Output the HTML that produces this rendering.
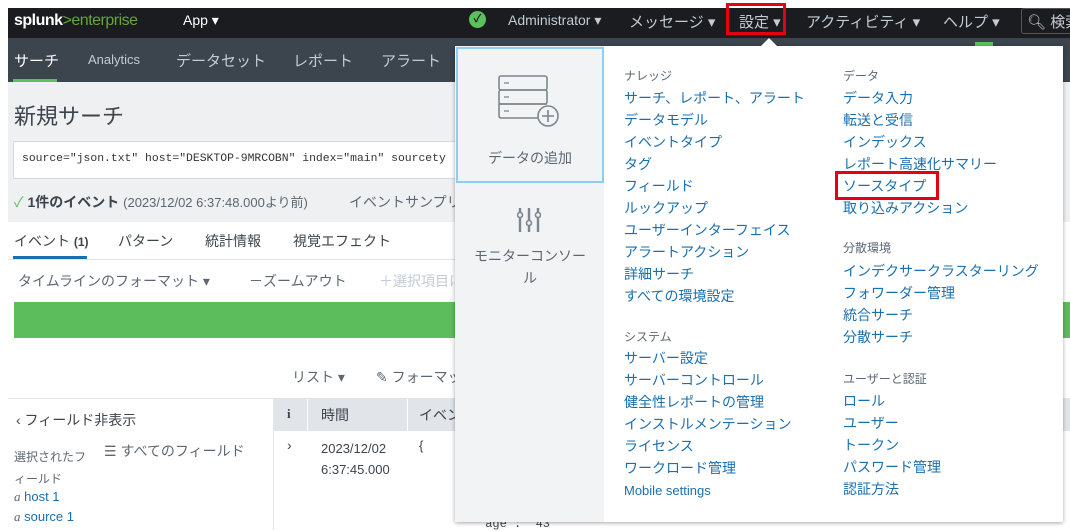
<!DOCTYPE html>
<html><head><meta charset="utf-8"><style>
*{margin:0;padding:0;box-sizing:border-box}
body{width:1070px;height:530px;overflow:hidden;background:#fff;font-family:"Liberation Sans","Noto Sans CJK JP",sans-serif;position:relative;color:#3c444d}
.a{position:absolute;white-space:nowrap}
.w{color:#fff}
.l{color:#c3cbd4}
.blue{color:#1a6faf;font-size:14px}
.h{color:#5c6773;font-size:12px}
.red{position:absolute;border:3px solid #e60012}
</style></head><body>
<!-- top bar -->
<div class="a" style="left:8px;top:8px;width:1062px;height:30px;background:#1a1c20"></div>
<div class="a" style="left:14px;top:12px;font-size:16px;font-weight:bold;color:#fff;letter-spacing:-0.5px">splunk<span style="color:#65a637;font-weight:normal">&gt;enterprise</span></div>
<div class="a w" style="left:183px;top:12px;font-size:14px">App ▾</div>
<div class="a" style="left:469px;top:11px;width:17px;height:17px;border-radius:50%;background:#5cc05c;color:#1a1c20;font-size:11px;text-align:center;line-height:17px;font-weight:bold">✓</div>
<div class="a l" style="left:508px;top:12px;font-size:14px">Administrator ▾</div>
<div class="a l" style="left:629px;top:11px;font-size:15px">メッセージ ▾</div>
<div class="a l" style="left:739px;top:11px;font-size:15px">設定 ▾</div>
<div class="red" style="left:726px;top:3px;width:60px;height:32px"></div>
<div class="a l" style="left:806px;top:11px;font-size:15px">アクティビティ ▾</div>
<div class="a l" style="left:943px;top:11px;font-size:15px">ヘルプ ▾</div>
<div class="a" style="left:1021px;top:8px;width:55px;height:26px;border:1px solid #555;border-radius:3px"></div>
<div class="a l" style="left:1027px;top:11px;font-size:15px">🔍︎ 検索</div>
<!-- app bar -->
<div class="a" style="left:8px;top:38px;width:1062px;height:44px;background:#3c444d"></div>
<div class="a w" style="left:14px;top:50px;font-size:15px">サーチ</div>
<div class="a" style="left:13px;top:79px;width:44px;height:3px;background:#5cc05c"></div>
<div class="a l" style="left:88px;top:52px;font-size:13px">Analytics</div>
<div class="a l" style="left:176px;top:50px;font-size:15px">データセット</div>
<div class="a l" style="left:293px;top:50px;font-size:15px">レポート</div>
<div class="a l" style="left:381px;top:50px;font-size:15px">アラート</div>
<div class="a" style="left:975px;top:42px;width:18px;height:4px;background:#5cc05c"></div>
<!-- page -->
<div class="a" style="left:8px;top:82px;width:1062px;height:140px;background:#eef0f1"></div>
<div class="a" style="left:14px;top:99px;font-size:22px;color:#3c444d">新規サーチ</div>
<div class="a" style="left:13px;top:141px;width:450px;height:38px;background:#fff;border:1px solid #d4d7db;border-radius:2px"></div>
<div class="a" style="left:22px;top:153px;font-family:'Liberation Mono',monospace;font-size:11.4px;color:#333">source="json.txt" host="DESKTOP-9MRCOBN" index="main" sourcety</div>
<div class="a" style="left:14px;top:192px;font-size:14px"><span style="color:#5cc05c">✓</span> <b>1件のイベント</b> <span style="color:#5c6773;font-size:13px">(2023/12/02 6:37:48.000より前)</span></div>
<div class="a" style="left:349px;top:192px;font-size:14px;color:#5c6773">イベントサンプリ</div>
<div class="a" style="left:14px;top:231px;font-size:14px">イベント <b style="font-size:12px">(1)</b></div>
<div class="a" style="left:118px;top:231px;font-size:14px">パターン</div>
<div class="a" style="left:205px;top:231px;font-size:14px">統計情報</div>
<div class="a" style="left:293px;top:231px;font-size:14px">視覚エフェクト</div>
<div class="a" style="left:13px;top:256px;width:74px;height:3px;background:#1a6faf"></div>
<div class="a" style="left:8px;top:259px;width:450px;height:1px;background:#e1e4e8"></div>
<div class="a" style="left:18px;top:271px;font-size:14px;color:#5c6773">タイムラインのフォーマット ▾</div>
<div class="a" style="left:249px;top:271px;font-size:14px;color:#5c6773">－ズームアウト</div>
<div class="a" style="left:379px;top:271px;font-size:14px;color:#c3cbd4">＋選択項目に</div>
<div class="a" style="left:14px;top:302px;width:1060px;height:36px;background:#5cbd5c"></div>
<div class="a" style="left:292px;top:367px;font-size:14px;color:#5c6773">リスト ▾</div>
<div class="a" style="left:376px;top:367px;font-size:14px;color:#5c6773">✎ フォーマット</div>
<div class="a" style="left:8px;top:398px;width:1062px;height:1px;background:#e1e4e8"></div>
<div class="a" style="left:16px;top:410px;font-size:14px;color:#3c444d">‹ フィールド非表示</div>
<div class="a" style="left:14px;top:446px;font-size:12px;color:#5c6773;line-height:22px">選択されたフ<br>ィールド</div>
<div class="a" style="left:104px;top:441px;font-size:14px;color:#5c6773">☰ すべてのフィールド</div>
<div class="a" style="left:14px;top:489px;font-size:13px;color:#1a6faf"><i style="font-family:'Liberation Serif';color:#5c6773">a</i> host 1</div>
<div class="a" style="left:14px;top:509px;font-size:13px;color:#1a6faf"><i style="font-family:'Liberation Serif';color:#5c6773">a</i> source 1</div>
<div class="a" style="left:273px;top:399px;width:800px;height:32px;background:#e1e4e8"></div>
<div class="a" style="left:307px;top:399px;width:1px;height:32px;background:#fff"></div>
<div class="a" style="left:407px;top:399px;width:1px;height:32px;background:#fff"></div>
<div class="a" style="left:273px;top:399px;width:1px;height:131px;background:#e1e4e8"></div>
<div class="a" style="left:287px;top:406px;font-size:13px;font-weight:bold;font-family:'Liberation Serif'">i</div>
<div class="a" style="left:321px;top:405px;font-size:14px">時間</div>
<div class="a" style="left:419px;top:405px;font-size:14px">イベント</div>
<div class="a" style="left:287px;top:437px;font-size:14px">›</div>
<div class="a" style="left:321px;top:438px;font-size:13px;line-height:21px">2023/12/02<br>6:37:45.000</div>
<div class="a" style="left:419px;top:438px;font-size:13px">{</div>
<div class="a" style="left:478px;top:517px;font-size:12px;font-family:'Liberation Mono'">"age": "43"</div>
<!-- dropdown -->
<div class="a" style="left:455px;top:46px;width:608px;height:476px;background:#fff;box-shadow:0 1px 4px rgba(0,0,0,.35)"></div>
<div class="a" style="left:761px;top:38px;width:0;height:0;border-left:8px solid transparent;border-right:8px solid transparent;border-bottom:8px solid #fff"></div>
<div class="a" style="left:455px;top:46px;width:149px;height:476px;background:#f2f3f4"></div>
<div class="a" style="left:456px;top:47px;width:148px;height:136px;background:#f2f3f4;border:2px solid #8fcdf2"></div>
<svg class="a" style="left:496px;top:73px" width="66" height="56" viewBox="0 0 66 56" fill="none" stroke="#7d858e" stroke-width="1.6">
<rect x="3" y="3" width="48" height="14" rx="2"/><rect x="3" y="17" width="48" height="14" rx="2"/><path d="M51 45H5a2 2 0 0 1-2-2V31h48"/>
<path d="M8 10h5M8 24h5M8 38h5" stroke-width="1.2"/><circle cx="52" cy="43" r="10" fill="#f2f3f4"/><path d="M52 37v12M46 43h12"/></svg>
<div class="a" style="left:488px;top:148px;font-size:14px;color:#5c6773">データの追加</div>
<svg class="a" style="left:517px;top:207px" width="24" height="26" viewBox="0 0 24 26" fill="none" stroke="#7d858e" stroke-width="2.4">
<path d="M3 1v24M12 1v24M21 1v24"/><circle cx="3" cy="8" r="2.5" fill="#f2f3f4" stroke-width="1.6"/><circle cx="12" cy="16" r="2.5" fill="#f2f3f4" stroke-width="1.6"/><circle cx="21" cy="8" r="2.5" fill="#f2f3f4" stroke-width="1.6"/></svg>
<div class="a" style="left:474px;top:245px;font-size:14px;color:#5c6773;text-align:center;width:112px;white-space:normal;line-height:22px">モニターコンソール</div>

<div class="a h" style="left:624px;top:67px">ナレッジ</div>
<div class="a blue" style="left:624px;top:87px;line-height:22px">サーチ、レポート、アラート<br>データモデル<br>イベントタイプ<br>タグ<br>フィールド<br>ルックアップ<br>ユーザーインターフェイス<br>アラートアクション<br>詳細サーチ<br>すべての環境設定</div>
<div class="a h" style="left:624px;top:328px">システム</div>
<div class="a blue" style="left:624px;top:347px;line-height:22px">サーバー設定<br>サーバーコントロール<br>健全性レポートの管理<br>インストルメンテーション<br>ライセンス<br>ワークロード管理<br><span style="font-size:13px">Mobile settings</span></div>
<div class="a h" style="left:843px;top:67px">データ</div>
<div class="a blue" style="left:843px;top:87px;line-height:22px">データ入力<br>転送と受信<br>インデックス<br>レポート高速化サマリー<br>ソースタイプ<br>取り込みアクション</div>
<div class="red" style="left:835px;top:171px;width:104px;height:29px"></div>
<div class="a h" style="left:843px;top:239px">分散環境</div>
<div class="a blue" style="left:843px;top:260px;line-height:22px">インデクサークラスターリング<br>フォワーダー管理<br>統合サーチ<br>分散サーチ</div>
<div class="a h" style="left:843px;top:370px">ユーザーと認証</div>
<div class="a blue" style="left:843px;top:390px;line-height:22px">ロール<br>ユーザー<br>トークン<br>パスワード管理<br>認証方法</div>
</body></html>
